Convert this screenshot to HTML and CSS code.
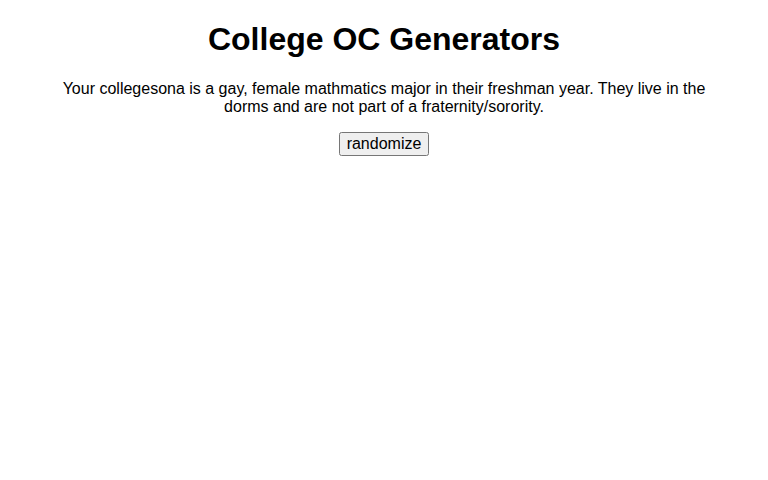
FILE: index.html
```html
<!DOCTYPE html>
<html>
  <head>
    <title>College OC Generators</title>
    <meta name="viewport" content="width=device-width, initial-scale=1" />
    <link rel="stylesheet" href="styles.css">
  </head>
  <body>
    <div id="container">
      <h1 class="title">College OC Generators</h1>
      <p class="result" id="result">Your collegesona is a gay, female mathmatics major in their freshman year. They live in the dorms and are not part of a fraternity/sorority.</p>
      <button id="randomize">randomize</button>
    </div>
  </body>
</html>
```

FILE: styles.css
```css
/* base */
body {
  margin: 0;
  font-family: "Liberation Sans", Arial, sans-serif;
}

#container {
  text-align: center;
}

.title {
  font-size: 32px;
  margin: 21px 0 22px;
}

/* generated description */
.result {
  max-width: 660px;
  margin: 16px auto;
  font-size: 16px;
}

#randomize {
  font-family: "Liberation Sans", Arial, sans-serif;
  font-size: 16px;
}
```
